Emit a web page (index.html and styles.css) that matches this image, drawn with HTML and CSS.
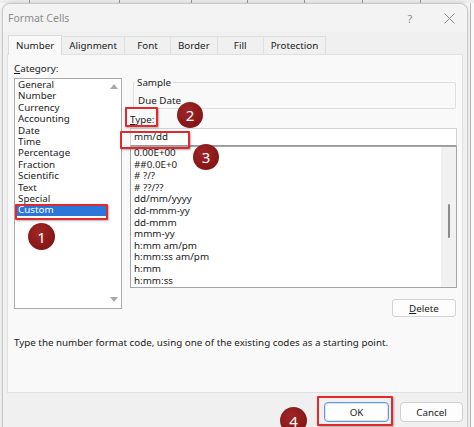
FILE: index.html
```html
<!DOCTYPE html>
<html>
<head>
<meta charset="utf-8">
<title>Format Cells</title>
<link rel="stylesheet" href="styles.css">
</head>
<body>
<div class="excel-strip"><span class="s1"></span><span class="s2"></span><span class="s3"></span><span class="s4"></span><span class="s5"></span><span class="s6"></span><span class="s7"></span></div>
<div class="dialog">
  <div class="titlebar">
    <span class="title">Format Cells</span>
    <span class="help">?</span>
    <span class="close"><svg width="11" height="11" viewBox="0 0 11 11"><path d="M0.5 0.5 L10.5 10.5 M10.5 0.5 L0.5 10.5" stroke="#8a8a8a" stroke-width="1" fill="none"/></svg></span>
  </div>
  <div class="tabs">
    <div class="tab active">Number</div>
    <div class="tab">Alignment</div>
    <div class="tab">Font</div>
    <div class="tab">Border</div>
    <div class="tab">Fill</div>
    <div class="tab">Protection</div>
  </div>
  <div class="panel">
    <div class="panel-grid">
      <div class="col-left">
        <div class="label cat-label"><u>C</u>ategory:</div>
        <div class="catlist">
          <div class="items">
            <div class="item">General</div>
            <div class="item">Number</div>
            <div class="item">Currency</div>
            <div class="item">Accounting</div>
            <div class="item">Date</div>
            <div class="item">Time</div>
            <div class="item">Percentage</div>
            <div class="item">Fraction</div>
            <div class="item">Scientific</div>
            <div class="item">Text</div>
            <div class="item">Special</div>
            <div class="item selected">Custom</div>
          </div>
          <div class="vscroll">
            <svg width="8" height="5" viewBox="0 0 8 5"><path d="M0 5 L4 0 L8 5 Z" fill="#a9a9a9"/></svg>
            <svg width="8" height="5" viewBox="0 0 8 5"><path d="M0 0 L4 5 L8 0 Z" fill="#a9a9a9"/></svg>
          </div>
        </div>
      </div>
      <div class="col-right">
        <fieldset class="sample">
          <legend>Sample</legend>
          <div class="sample-value">Due Date</div>
        </fieldset>
        <div class="label type-label"><u>T</u>ype:</div>
        <div class="type-input">mm/dd</div>
        <div class="typelist">
          <div class="items">
            <div class="titem">0.00E+00</div>
            <div class="titem">##0.0E+0</div>
            <div class="titem"># ?/?</div>
            <div class="titem"># ??/??</div>
            <div class="titem">dd/mm/yyyy</div>
            <div class="titem">dd-mmm-yy</div>
            <div class="titem">dd-mmm</div>
            <div class="titem">mmm-yy</div>
            <div class="titem">h:mm am/pm</div>
            <div class="titem">h:mm:ss am/pm</div>
            <div class="titem">h:mm</div>
            <div class="titem">h:mm:ss</div>
          </div>
          <div class="scrollbar"><div class="thumb"></div></div>
        </div>
        <div class="delete-row"><button class="btn-small"><u>D</u>elete</button></div>
      </div>
    </div>
    <p class="hint">Type the number format code, using one of the existing codes as a starting point.</p>
  </div>
  <div class="footer">
    <button class="btn btn-ok">OK</button>
    <button class="btn btn-cancel">Cancel</button>
  </div>
</div>

<div class="mark m1"></div>
<div class="mark m2"></div>
<div class="mark m3"></div>
<div class="mark m4"></div>
<div class="badge b1">1</div>
<div class="badge b2">2</div>
<div class="badge b3">3</div>
<div class="badge b4">4</div>
</body>
</html>
```
FILE: styles.css
```css
* { box-sizing: border-box; }
html, body { margin: 0; padding: 0; }
body {
  width: 474px;
  height: 427px;
  overflow: hidden;
  position: relative;
  font-family: "Noto Sans", "Open Sans", "Liberation Sans", sans-serif;
  font-size: 9.8px;
  color: #1b1b1b;
  background: #fafafa linear-gradient(to right, transparent 470px, #b8b8b8 470px, #b8b8b8 471px, transparent 471px);
}

.excel-strip { height: 3px; display: flex; background: #eeeeee; }
.excel-strip span { height: 3px; border-right: 1px solid #8f8f8f; }
.s1 { width: 30px; }
.s2 { width: 90px; }
.s3 { width: 72px; }
.s4 { width: 56px; }
.s5 { width: 57px; }
.s6 { width: 58px; }
.s7 { width: 58px; }

.dialog {
  margin-left: 2px;
  width: 466px;
  height: 440px;
  border: 1px solid #c9c9c9;
  border-radius: 8px 8px 0 0;
  background: #f0f0f0;
  box-shadow: 0 0 4px rgba(0, 0, 0, 0.18);
  display: flex;
  flex-direction: column;
}

.titlebar {
  height: 28px;
  display: flex;
  align-items: center;
  padding: 0 12px 0 5px;
  background: #f3f3f3;
  border-radius: 8px 8px 0 0;
}
.title { flex: 1; color: #8d8d8d; font-size: 10.5px; }
.help { color: #8d8d8d; font-size: 11px; width: 10px; text-align: center; margin-right: 29px; }
.close svg { display: block; }

.tabs {
  height: 22px;
  display: flex;
  align-items: flex-end;
  padding-left: 5px;
}
.tab {
  height: 18px;
  min-width: 47px;
  padding: 0 7px;
  line-height: 17px;
  text-align: center;
  border: 1px solid #e0e0e0;
  border-bottom: none;
  background: #f0f0f0;
  margin-right: -1px;
}
.tab.active {
  height: 20px;
  line-height: 19px;
  background: #f9f9f9;
  margin-bottom: -1px;
  position: relative;
  z-index: 1;
  border-color: #dadada;
}

.panel {
  height: 339px;
  margin: 0 4px;
  background: #f9f9f9;
  border: 1px solid #e0e0e0;
  padding: 7px 5px 0 6px;
}
.panel-grid {
  display: grid;
  grid-template-columns: 108px 1fr;
  column-gap: 8px;
  align-items: start;
}
.label { line-height: 13px; }
.cat-label { margin-bottom: 3px; }

.catlist {
  height: 231px;
  border: 1px solid #ababab;
  background: #fff;
  display: flex;
}
.catlist .items { flex: 1; padding-left: 2px; }
.item { height: 11.4px; line-height: 11.4px; padding-left: 1px; white-space: nowrap; }
.item.selected { background: #2b76d9; color: #fff; }
.vscroll {
  width: 15px;
  display: flex;
  flex-direction: column;
  justify-content: space-between;
  align-items: center;
  padding: 5px 0 6px;
}
.vscroll svg { display: block; }

.sample {
  margin: 14px 1px 0 3px;
  padding: 0 0 1px 1px;
  border: 1px solid #dedede;
  border-radius: 2px;
  min-width: 0;
}
.sample legend { padding: 0 2px; line-height: 13px; }
.sample-value { margin-top: 5px; padding-left: 3px; line-height: 13px; }
.type-label { margin-top: 4px; }
.type-input {
  margin-top: 2px;
  height: 18px;
  background: #fff;
  border: 1px solid #d2d2d2;
  border-bottom-color: #9a9a9a;
  padding-left: 3px;
  line-height: 16px;
}
.typelist {
  height: 142px;
  border: 1px solid #a5a5a5;
  background: #fff;
  display: flex;
}
.typelist .items { flex: 1; padding-left: 3px; overflow: hidden; }
.titem { height: 11.6px; line-height: 11.6px; white-space: nowrap; }
.scrollbar { width: 15px; background: #f1f1f1; padding-top: 57px; display: flex; justify-content: center; }
.thumb { width: 2px; height: 34px; background: #8a8a8a; border-radius: 1px; }

.delete-row { display: flex; justify-content: flex-end; margin-top: 11px; padding-right: 1px; }
.btn-small {
  width: 64px;
  height: 18px;
  border: 1px solid #d3d3d3;
  border-radius: 3px;
  background: #fdfdfd;
  font: inherit;
  color: inherit;
  padding: 0;
}

.hint { margin: 19px 0 0; line-height: 13px; }

.footer {
  display: flex;
  justify-content: flex-end;
  gap: 11px;
  padding: 9px 4px 0 0;
}
.btn {
  height: 20px;
  border-radius: 4px;
  background: #fdfdfd;
  border: 1px solid #d0d0d0;
  font: inherit;
  color: inherit;
  padding: 0;
}
.btn-ok { width: 65px; border-color: #5b9ae0; box-shadow: inset 0 0 0 1px #d7e7f8; }
.btn-cancel { width: 63px; }

.mark {
  position: absolute;
  border: 2px solid #e0282d;
  border-radius: 1px;
  box-shadow: 1px 1px 2px rgba(0, 0, 0, 0.3);
}
.m1 { left: 15px; top: 204px; width: 93px; height: 16px; }
.m2 { left: 125px; top: 107px; width: 33px; height: 20px; }
.m3 { left: 120px; top: 131px; width: 70px; height: 18px; }
.m4 { left: 317px; top: 396px; width: 76px; height: 30px; }

.badge {
  position: absolute;
  border-radius: 50%;
  background: radial-gradient(circle at 40% 35%, #a02626, #7a0f10);
  color: #fff;
  font-size: 15px;
  display: flex;
  align-items: center;
  justify-content: center;
}
.b1 { left: 28px; top: 223px; width: 27px; height: 27px; }
.b2 { left: 177px; top: 102px; width: 26px; height: 26px; }
.b3 { left: 193px; top: 144px; width: 26px; height: 26px; }
.b4 { left: 280px; top: 407px; width: 27px; height: 27px; }
```
